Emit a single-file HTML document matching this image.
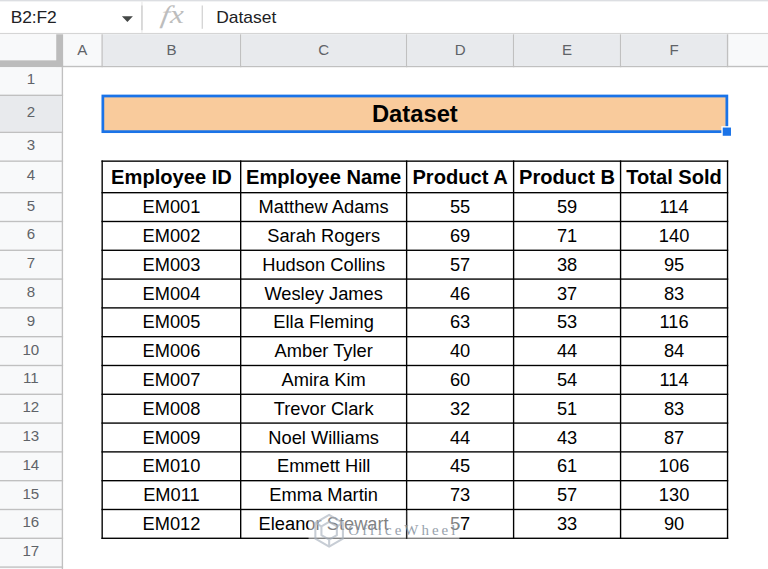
<!DOCTYPE html>
<html lang="en"><head><meta charset="utf-8"><title>Dataset - Google Sheets</title>
<style>
html,body{margin:0;padding:0;background:#fff;}
body{width:768px;height:569px;overflow:hidden;position:relative;}
#s{position:absolute;left:0;top:0;width:560px;height:415px;transform-origin:0 0;transform:scale(1.371429);
font-family:"Liberation Sans",sans-serif;overflow:hidden;background:#fff;}
.b{position:absolute;}
.t{position:absolute;left:0;top:0;transform-origin:0 0;white-space:nowrap;overflow:visible;}
</style></head><body><div id="s">
<div class="b" style="left:0px;top:0px;width:560px;height:1px;background:#dcdee2;"></div>
<div class="b" style="left:0px;top:24px;width:560px;height:1px;background:#d5d5d5;"></div>
<div class="t" style="width:80px;transform:translate(7.9px,5.01px);font-size:12.7px;line-height:17.78px;text-align:left;letter-spacing:-0.1px;color:#202124;">B2:F2</div>
<svg class="b" style="left:88px;top:11px" width="10" height="6" viewBox="0 0 10 6"><path d="M0.9 0.8 L8.9 0.8 L4.9 5.0 Z" fill="#444746"/></svg>
<div class="b" style="left:103px;top:1px;width:1px;height:23px;background:#ececec;"></div>
<div class="b" style="left:103px;top:4px;width:1px;height:17.5px;background:#cfcfcf;"></div>
<div class="t" style="width:20px;transform:translate(119.5px,-1.31px) skewX(-9deg) scaleX(1.24);font-size:18.3px;line-height:25.62px;text-align:left;letter-spacing:0px;color:#bdbdbd;font-family:'Liberation Serif',serif;font-style:italic;">f</div>
<div class="t" style="width:20px;transform:translate(124.0px,-1.31px) scaleX(1.24);font-size:18.3px;line-height:25.62px;text-align:left;letter-spacing:0px;color:#bdbdbd;font-family:'Liberation Serif',serif;font-style:italic;">x</div>
<div class="b" style="left:147px;top:4px;width:1px;height:17px;background:#d6d6d6;"></div>
<div class="t" style="width:200px;transform:translate(157.7px,4.91px);font-size:12.7px;line-height:17.78px;text-align:left;letter-spacing:0.0px;color:#202124;">Dataset</div>
<div class="b" style="left:0px;top:25px;width:560px;height:24px;background:#f8f9fa;"></div>
<div class="b" style="left:0px;top:48px;width:560px;height:1px;background:#c0c0c0;"></div>
<div class="b" style="left:74px;top:25px;width:1px;height:24px;background:#c0c0c0;"></div>
<div class="t" style="width:28px;transform:translate(46px,29.20px);font-size:11px;line-height:15.4px;text-align:center;letter-spacing:0px;color:#5f6368;">A</div>
<div class="b" style="left:75px;top:25px;width:100px;height:23px;background:#e8eaed;"></div>
<div class="b" style="left:175px;top:25px;width:1px;height:24px;background:#c0c0c0;"></div>
<div class="t" style="width:100px;transform:translate(75px,29.20px);font-size:11px;line-height:15.4px;text-align:center;letter-spacing:0px;color:#5f6368;">B</div>
<div class="b" style="left:176px;top:25px;width:120px;height:23px;background:#e8eaed;"></div>
<div class="b" style="left:296px;top:25px;width:1px;height:24px;background:#c0c0c0;"></div>
<div class="t" style="width:120px;transform:translate(176px,29.20px);font-size:11px;line-height:15.4px;text-align:center;letter-spacing:0px;color:#5f6368;">C</div>
<div class="b" style="left:297px;top:25px;width:77px;height:23px;background:#e8eaed;"></div>
<div class="b" style="left:374px;top:25px;width:1px;height:24px;background:#c0c0c0;"></div>
<div class="t" style="width:77px;transform:translate(297px,29.20px);font-size:11px;line-height:15.4px;text-align:center;letter-spacing:0px;color:#5f6368;">D</div>
<div class="b" style="left:375px;top:25px;width:77px;height:23px;background:#e8eaed;"></div>
<div class="b" style="left:452px;top:25px;width:1px;height:24px;background:#c0c0c0;"></div>
<div class="t" style="width:77px;transform:translate(375px,29.20px);font-size:11px;line-height:15.4px;text-align:center;letter-spacing:0px;color:#5f6368;">E</div>
<div class="b" style="left:453px;top:25px;width:77px;height:23px;background:#e8eaed;"></div>
<div class="b" style="left:530px;top:25px;width:1px;height:24px;background:#c0c0c0;"></div>
<div class="t" style="width:77px;transform:translate(453px,29.20px);font-size:11px;line-height:15.4px;text-align:center;letter-spacing:0px;color:#5f6368;">F</div>
<div class="b" style="left:0px;top:25px;width:41px;height:19px;background:#f8f9fa;"></div>
<div class="b" style="left:41px;top:25px;width:4.6px;height:24px;background:#bcbcbc;"></div>
<div class="b" style="left:0px;top:44px;width:45.6px;height:4.6px;background:#bcbcbc;"></div>
<div class="b" style="left:0px;top:49px;width:45px;height:366px;background:#f8f9fa;"></div>
<div class="b" style="left:45px;top:49px;width:1px;height:366px;background:#c0c0c0;"></div>
<div class="b" style="left:0px;top:69px;width:46px;height:1px;background:#c0c0c0;"></div>
<div class="t" style="width:45px;transform:translate(0px,50.54px);font-size:11px;line-height:15.4px;text-align:center;letter-spacing:0px;color:#5f6368;">1</div>
<div class="b" style="left:0px;top:70px;width:45px;height:26px;background:#e8eaed;"></div>
<div class="b" style="left:0px;top:96px;width:46px;height:1px;background:#c0c0c0;"></div>
<div class="t" style="width:45px;transform:translate(0px,74.54px);font-size:11px;line-height:15.4px;text-align:center;letter-spacing:0px;color:#5f6368;">2</div>
<div class="b" style="left:0px;top:117px;width:46px;height:1px;background:#c0c0c0;"></div>
<div class="t" style="width:45px;transform:translate(0px,98.54px);font-size:11px;line-height:15.4px;text-align:center;letter-spacing:0px;color:#5f6368;">3</div>
<div class="b" style="left:0px;top:140px;width:46px;height:1px;background:#c0c0c0;"></div>
<div class="t" style="width:45px;transform:translate(0px,120.54px);font-size:11px;line-height:15.4px;text-align:center;letter-spacing:0px;color:#5f6368;">4</div>
<div class="b" style="left:0px;top:161px;width:46px;height:1px;background:#c0c0c0;"></div>
<div class="t" style="width:45px;transform:translate(0px,142.54px);font-size:11px;line-height:15.4px;text-align:center;letter-spacing:0px;color:#5f6368;">5</div>
<div class="b" style="left:0px;top:182px;width:46px;height:1px;background:#c0c0c0;"></div>
<div class="t" style="width:45px;transform:translate(0px,163.54px);font-size:11px;line-height:15.4px;text-align:center;letter-spacing:0px;color:#5f6368;">6</div>
<div class="b" style="left:0px;top:203px;width:46px;height:1px;background:#c0c0c0;"></div>
<div class="t" style="width:45px;transform:translate(0px,184.54px);font-size:11px;line-height:15.4px;text-align:center;letter-spacing:0px;color:#5f6368;">7</div>
<div class="b" style="left:0px;top:224px;width:46px;height:1px;background:#c0c0c0;"></div>
<div class="t" style="width:45px;transform:translate(0px,205.54px);font-size:11px;line-height:15.4px;text-align:center;letter-spacing:0px;color:#5f6368;">8</div>
<div class="b" style="left:0px;top:245px;width:46px;height:1px;background:#c0c0c0;"></div>
<div class="t" style="width:45px;transform:translate(0px,226.54px);font-size:11px;line-height:15.4px;text-align:center;letter-spacing:0px;color:#5f6368;">9</div>
<div class="b" style="left:0px;top:266px;width:46px;height:1px;background:#c0c0c0;"></div>
<div class="t" style="width:45px;transform:translate(0px,247.54px);font-size:11px;line-height:15.4px;text-align:center;letter-spacing:0px;color:#5f6368;">10</div>
<div class="b" style="left:0px;top:287px;width:46px;height:1px;background:#c0c0c0;"></div>
<div class="t" style="width:45px;transform:translate(0px,268.54px);font-size:11px;line-height:15.4px;text-align:center;letter-spacing:0px;color:#5f6368;">11</div>
<div class="b" style="left:0px;top:308px;width:46px;height:1px;background:#c0c0c0;"></div>
<div class="t" style="width:45px;transform:translate(0px,289.54px);font-size:11px;line-height:15.4px;text-align:center;letter-spacing:0px;color:#5f6368;">12</div>
<div class="b" style="left:0px;top:329px;width:46px;height:1px;background:#c0c0c0;"></div>
<div class="t" style="width:45px;transform:translate(0px,310.54px);font-size:11px;line-height:15.4px;text-align:center;letter-spacing:0px;color:#5f6368;">13</div>
<div class="b" style="left:0px;top:350px;width:46px;height:1px;background:#c0c0c0;"></div>
<div class="t" style="width:45px;transform:translate(0px,331.54px);font-size:11px;line-height:15.4px;text-align:center;letter-spacing:0px;color:#5f6368;">14</div>
<div class="b" style="left:0px;top:371px;width:46px;height:1px;background:#c0c0c0;"></div>
<div class="t" style="width:45px;transform:translate(0px,352.54px);font-size:11px;line-height:15.4px;text-align:center;letter-spacing:0px;color:#5f6368;">15</div>
<div class="b" style="left:0px;top:392px;width:46px;height:1px;background:#c0c0c0;"></div>
<div class="t" style="width:45px;transform:translate(0px,373.54px);font-size:11px;line-height:15.4px;text-align:center;letter-spacing:0px;color:#5f6368;">16</div>
<div class="b" style="left:0px;top:413px;width:46px;height:1px;background:#c0c0c0;"></div>
<div class="t" style="width:45px;transform:translate(0px,394.54px);font-size:11px;line-height:15.4px;text-align:center;letter-spacing:0px;color:#5f6368;">17</div>
<div class="b" style="left:75px;top:70px;width:455px;height:26px;background:#f9cb9c;"></div>
<div class="t" style="width:455px;transform:translate(75px,70.97px);font-size:17.333px;line-height:24.27px;text-align:center;letter-spacing:0px;font-weight:bold;color:#000;">Dataset</div>
<div class="b" style="left:74px;top:69px;width:457px;height:28px;background:transparent;box-sizing:border-box;border:2px solid #1a73e8;"></div>
<div class="b" style="left:526px;top:92px;width:8px;height:8px;background:#fff;"></div>
<div class="b" style="left:527px;top:93px;width:6px;height:6px;background:#1a73e8;"></div>
<div class="b" style="left:74px;top:117px;width:1px;height:276px;background:#000;"></div>
<div class="b" style="left:175px;top:117px;width:1px;height:276px;background:#000;"></div>
<div class="b" style="left:296px;top:117px;width:1px;height:276px;background:#000;"></div>
<div class="b" style="left:374px;top:117px;width:1px;height:276px;background:#000;"></div>
<div class="b" style="left:452px;top:117px;width:1px;height:276px;background:#000;"></div>
<div class="b" style="left:530px;top:117px;width:1px;height:276px;background:#000;"></div>
<div class="b" style="left:74px;top:117px;width:457px;height:1px;background:#000;"></div>
<div class="b" style="left:74px;top:140px;width:457px;height:1px;background:#000;"></div>
<div class="b" style="left:74px;top:161px;width:457px;height:1px;background:#000;"></div>
<div class="b" style="left:74px;top:182px;width:457px;height:1px;background:#000;"></div>
<div class="b" style="left:74px;top:203px;width:457px;height:1px;background:#000;"></div>
<div class="b" style="left:74px;top:224px;width:457px;height:1px;background:#000;"></div>
<div class="b" style="left:74px;top:245px;width:457px;height:1px;background:#000;"></div>
<div class="b" style="left:74px;top:266px;width:457px;height:1px;background:#000;"></div>
<div class="b" style="left:74px;top:287px;width:457px;height:1px;background:#000;"></div>
<div class="b" style="left:74px;top:308px;width:457px;height:1px;background:#000;"></div>
<div class="b" style="left:74px;top:329px;width:457px;height:1px;background:#000;"></div>
<div class="b" style="left:74px;top:350px;width:457px;height:1px;background:#000;"></div>
<div class="b" style="left:74px;top:371px;width:457px;height:1px;background:#000;"></div>
<div class="b" style="left:74px;top:392px;width:457px;height:1px;background:#000;"></div>
<div class="t" style="width:100px;transform:translate(75px,119.43px);font-size:14.667px;line-height:20.53px;text-align:center;letter-spacing:0px;font-weight:bold;color:#000;white-space:nowrap;">Employee ID</div>
<div class="t" style="width:120px;transform:translate(176px,119.43px);font-size:14.667px;line-height:20.53px;text-align:center;letter-spacing:0px;font-weight:bold;color:#000;white-space:nowrap;">Employee Name</div>
<div class="t" style="width:77px;transform:translate(297px,119.43px);font-size:14.667px;line-height:20.53px;text-align:center;letter-spacing:0px;font-weight:bold;color:#000;white-space:nowrap;">Product A</div>
<div class="t" style="width:77px;transform:translate(375px,119.43px);font-size:14.667px;line-height:20.53px;text-align:center;letter-spacing:0px;font-weight:bold;color:#000;white-space:nowrap;">Product B</div>
<div class="t" style="width:77px;transform:translate(453px,119.43px);font-size:14.667px;line-height:20.53px;text-align:center;letter-spacing:0px;font-weight:bold;color:#000;white-space:nowrap;">Total Sold</div>
<div class="t" style="width:100px;transform:translate(75px,142.51px);font-size:13.333px;line-height:18.67px;text-align:center;letter-spacing:0px;color:#000;">EM001</div>
<div class="t" style="width:120px;transform:translate(176px,142.51px);font-size:13.333px;line-height:18.67px;text-align:center;letter-spacing:0px;color:#000;">Matthew Adams</div>
<div class="t" style="width:77px;transform:translate(297px,142.51px);font-size:13.333px;line-height:18.67px;text-align:center;letter-spacing:0px;color:#000;">55</div>
<div class="t" style="width:77px;transform:translate(375px,142.51px);font-size:13.333px;line-height:18.67px;text-align:center;letter-spacing:0px;color:#000;">59</div>
<div class="t" style="width:77px;transform:translate(453px,142.51px);font-size:13.333px;line-height:18.67px;text-align:center;letter-spacing:0px;color:#000;">114</div>
<div class="t" style="width:100px;transform:translate(75px,163.51px);font-size:13.333px;line-height:18.67px;text-align:center;letter-spacing:0px;color:#000;">EM002</div>
<div class="t" style="width:120px;transform:translate(176px,163.51px);font-size:13.333px;line-height:18.67px;text-align:center;letter-spacing:0px;color:#000;">Sarah Rogers</div>
<div class="t" style="width:77px;transform:translate(297px,163.51px);font-size:13.333px;line-height:18.67px;text-align:center;letter-spacing:0px;color:#000;">69</div>
<div class="t" style="width:77px;transform:translate(375px,163.51px);font-size:13.333px;line-height:18.67px;text-align:center;letter-spacing:0px;color:#000;">71</div>
<div class="t" style="width:77px;transform:translate(453px,163.51px);font-size:13.333px;line-height:18.67px;text-align:center;letter-spacing:0px;color:#000;">140</div>
<div class="t" style="width:100px;transform:translate(75px,184.51px);font-size:13.333px;line-height:18.67px;text-align:center;letter-spacing:0px;color:#000;">EM003</div>
<div class="t" style="width:120px;transform:translate(176px,184.51px);font-size:13.333px;line-height:18.67px;text-align:center;letter-spacing:0px;color:#000;">Hudson Collins</div>
<div class="t" style="width:77px;transform:translate(297px,184.51px);font-size:13.333px;line-height:18.67px;text-align:center;letter-spacing:0px;color:#000;">57</div>
<div class="t" style="width:77px;transform:translate(375px,184.51px);font-size:13.333px;line-height:18.67px;text-align:center;letter-spacing:0px;color:#000;">38</div>
<div class="t" style="width:77px;transform:translate(453px,184.51px);font-size:13.333px;line-height:18.67px;text-align:center;letter-spacing:0px;color:#000;">95</div>
<div class="t" style="width:100px;transform:translate(75px,205.51px);font-size:13.333px;line-height:18.67px;text-align:center;letter-spacing:0px;color:#000;">EM004</div>
<div class="t" style="width:120px;transform:translate(176px,205.51px);font-size:13.333px;line-height:18.67px;text-align:center;letter-spacing:0px;color:#000;">Wesley James</div>
<div class="t" style="width:77px;transform:translate(297px,205.51px);font-size:13.333px;line-height:18.67px;text-align:center;letter-spacing:0px;color:#000;">46</div>
<div class="t" style="width:77px;transform:translate(375px,205.51px);font-size:13.333px;line-height:18.67px;text-align:center;letter-spacing:0px;color:#000;">37</div>
<div class="t" style="width:77px;transform:translate(453px,205.51px);font-size:13.333px;line-height:18.67px;text-align:center;letter-spacing:0px;color:#000;">83</div>
<div class="t" style="width:100px;transform:translate(75px,226.51px);font-size:13.333px;line-height:18.67px;text-align:center;letter-spacing:0px;color:#000;">EM005</div>
<div class="t" style="width:120px;transform:translate(176px,226.51px);font-size:13.333px;line-height:18.67px;text-align:center;letter-spacing:0px;color:#000;">Ella Fleming</div>
<div class="t" style="width:77px;transform:translate(297px,226.51px);font-size:13.333px;line-height:18.67px;text-align:center;letter-spacing:0px;color:#000;">63</div>
<div class="t" style="width:77px;transform:translate(375px,226.51px);font-size:13.333px;line-height:18.67px;text-align:center;letter-spacing:0px;color:#000;">53</div>
<div class="t" style="width:77px;transform:translate(453px,226.51px);font-size:13.333px;line-height:18.67px;text-align:center;letter-spacing:0px;color:#000;">116</div>
<div class="t" style="width:100px;transform:translate(75px,247.52px);font-size:13.333px;line-height:18.67px;text-align:center;letter-spacing:0px;color:#000;">EM006</div>
<div class="t" style="width:120px;transform:translate(176px,247.52px);font-size:13.333px;line-height:18.67px;text-align:center;letter-spacing:0px;color:#000;">Amber Tyler</div>
<div class="t" style="width:77px;transform:translate(297px,247.52px);font-size:13.333px;line-height:18.67px;text-align:center;letter-spacing:0px;color:#000;">40</div>
<div class="t" style="width:77px;transform:translate(375px,247.52px);font-size:13.333px;line-height:18.67px;text-align:center;letter-spacing:0px;color:#000;">44</div>
<div class="t" style="width:77px;transform:translate(453px,247.52px);font-size:13.333px;line-height:18.67px;text-align:center;letter-spacing:0px;color:#000;">84</div>
<div class="t" style="width:100px;transform:translate(75px,268.52px);font-size:13.333px;line-height:18.67px;text-align:center;letter-spacing:0px;color:#000;">EM007</div>
<div class="t" style="width:120px;transform:translate(176px,268.52px);font-size:13.333px;line-height:18.67px;text-align:center;letter-spacing:0px;color:#000;">Amira Kim</div>
<div class="t" style="width:77px;transform:translate(297px,268.52px);font-size:13.333px;line-height:18.67px;text-align:center;letter-spacing:0px;color:#000;">60</div>
<div class="t" style="width:77px;transform:translate(375px,268.52px);font-size:13.333px;line-height:18.67px;text-align:center;letter-spacing:0px;color:#000;">54</div>
<div class="t" style="width:77px;transform:translate(453px,268.52px);font-size:13.333px;line-height:18.67px;text-align:center;letter-spacing:0px;color:#000;">114</div>
<div class="t" style="width:100px;transform:translate(75px,289.52px);font-size:13.333px;line-height:18.67px;text-align:center;letter-spacing:0px;color:#000;">EM008</div>
<div class="t" style="width:120px;transform:translate(176px,289.52px);font-size:13.333px;line-height:18.67px;text-align:center;letter-spacing:0px;color:#000;">Trevor Clark</div>
<div class="t" style="width:77px;transform:translate(297px,289.52px);font-size:13.333px;line-height:18.67px;text-align:center;letter-spacing:0px;color:#000;">32</div>
<div class="t" style="width:77px;transform:translate(375px,289.52px);font-size:13.333px;line-height:18.67px;text-align:center;letter-spacing:0px;color:#000;">51</div>
<div class="t" style="width:77px;transform:translate(453px,289.52px);font-size:13.333px;line-height:18.67px;text-align:center;letter-spacing:0px;color:#000;">83</div>
<div class="t" style="width:100px;transform:translate(75px,310.52px);font-size:13.333px;line-height:18.67px;text-align:center;letter-spacing:0px;color:#000;">EM009</div>
<div class="t" style="width:120px;transform:translate(176px,310.52px);font-size:13.333px;line-height:18.67px;text-align:center;letter-spacing:0px;color:#000;">Noel Williams</div>
<div class="t" style="width:77px;transform:translate(297px,310.52px);font-size:13.333px;line-height:18.67px;text-align:center;letter-spacing:0px;color:#000;">44</div>
<div class="t" style="width:77px;transform:translate(375px,310.52px);font-size:13.333px;line-height:18.67px;text-align:center;letter-spacing:0px;color:#000;">43</div>
<div class="t" style="width:77px;transform:translate(453px,310.52px);font-size:13.333px;line-height:18.67px;text-align:center;letter-spacing:0px;color:#000;">87</div>
<div class="t" style="width:100px;transform:translate(75px,331.52px);font-size:13.333px;line-height:18.67px;text-align:center;letter-spacing:0px;color:#000;">EM010</div>
<div class="t" style="width:120px;transform:translate(176px,331.52px);font-size:13.333px;line-height:18.67px;text-align:center;letter-spacing:0px;color:#000;">Emmett Hill</div>
<div class="t" style="width:77px;transform:translate(297px,331.52px);font-size:13.333px;line-height:18.67px;text-align:center;letter-spacing:0px;color:#000;">45</div>
<div class="t" style="width:77px;transform:translate(375px,331.52px);font-size:13.333px;line-height:18.67px;text-align:center;letter-spacing:0px;color:#000;">61</div>
<div class="t" style="width:77px;transform:translate(453px,331.52px);font-size:13.333px;line-height:18.67px;text-align:center;letter-spacing:0px;color:#000;">106</div>
<div class="t" style="width:100px;transform:translate(75px,352.52px);font-size:13.333px;line-height:18.67px;text-align:center;letter-spacing:0px;color:#000;">EM011</div>
<div class="t" style="width:120px;transform:translate(176px,352.52px);font-size:13.333px;line-height:18.67px;text-align:center;letter-spacing:0px;color:#000;">Emma Martin</div>
<div class="t" style="width:77px;transform:translate(297px,352.52px);font-size:13.333px;line-height:18.67px;text-align:center;letter-spacing:0px;color:#000;">73</div>
<div class="t" style="width:77px;transform:translate(375px,352.52px);font-size:13.333px;line-height:18.67px;text-align:center;letter-spacing:0px;color:#000;">57</div>
<div class="t" style="width:77px;transform:translate(453px,352.52px);font-size:13.333px;line-height:18.67px;text-align:center;letter-spacing:0px;color:#000;">130</div>
<div class="t" style="width:100px;transform:translate(75px,373.52px);font-size:13.333px;line-height:18.67px;text-align:center;letter-spacing:0px;color:#000;">EM012</div>
<div class="t" style="width:120px;transform:translate(176px,373.52px);font-size:13.333px;line-height:18.67px;text-align:center;letter-spacing:0px;color:#000;">Eleanor Stewart</div>
<div class="t" style="width:77px;transform:translate(297px,373.52px);font-size:13.333px;line-height:18.67px;text-align:center;letter-spacing:0px;color:#000;">57</div>
<div class="t" style="width:77px;transform:translate(375px,373.52px);font-size:13.333px;line-height:18.67px;text-align:center;letter-spacing:0px;color:#000;">33</div>
<div class="t" style="width:77px;transform:translate(453px,373.52px);font-size:13.333px;line-height:18.67px;text-align:center;letter-spacing:0px;color:#000;">90</div>
<div class="b" style="left:224.6px;top:372.6px;width:110.2px;height:21.2px;background:rgba(255,255,255,.5);"></div>
<svg class="b" style="left:225.9px;top:372.6px;overflow:visible" width="28" height="28" viewBox="-14 -14 28 28" fill="none" stroke="#aab3bf" stroke-width="1.5" stroke-linejoin="round" opacity=".65">
<path d="M0.00 -11.60 L10.05 -5.80 L10.05 5.80 L0.00 11.60 L-10.05 5.80 L-10.05 -5.80 Z"/><path d="M0.00 -6.50 L5.63 -3.25 L5.63 3.25 L0.00 6.50 L-5.63 3.25 L-5.63 -3.25 Z"/><path d="M5.63 -3.25 L10.05 -5.80 M0.00 6.50 L0.00 11.60 M-5.63 -3.25 L-10.05 -5.80"/></svg>
<div class="b" style="left:296px;top:372.6px;width:1px;height:20.4px;background:rgba(0,0,0,.7);"></div>
<div class="t" style="width:100px;transform:translate(254.0px,379.17px);font-size:10.9px;line-height:15.26px;text-align:left;letter-spacing:2.2px;color:#86919e;font-family:'Liberation Serif',serif;opacity:.85;">OfficeWheel</div>
</div></body></html>
